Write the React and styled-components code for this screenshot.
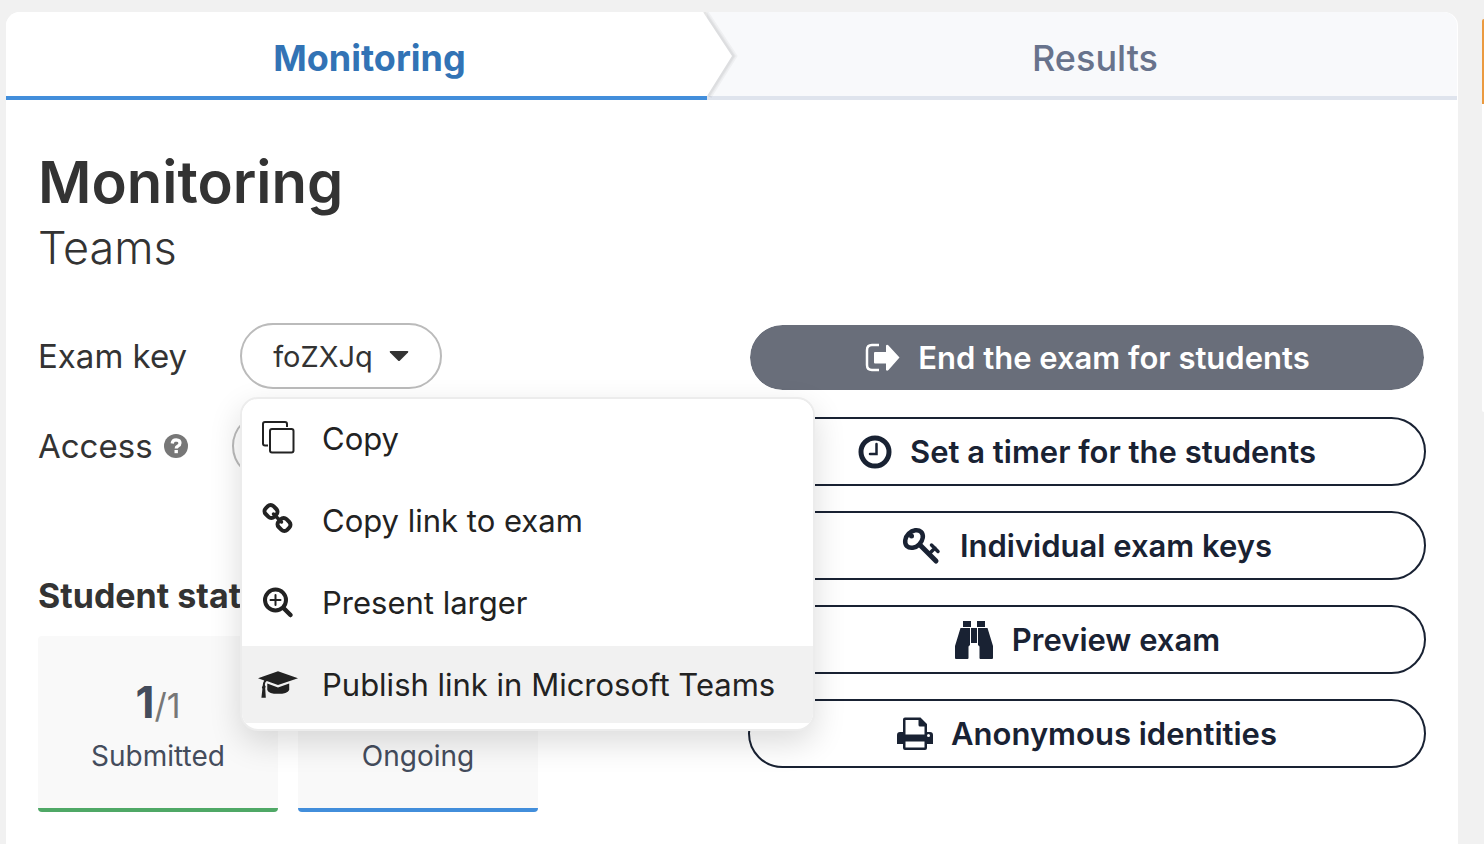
import React from "react";
import styled, { createGlobalStyle } from "styled-components";

const GlobalStyle = createGlobalStyle`
  *, *::before, *::after { box-sizing: border-box; }
  html, body, #root { height: 100%; }
  body {
    margin: 0;
    background: #f1f1f1;
    color: #333333;
    font-family: Inter, "Liberation Sans", sans-serif;
  }
  button { font-family: inherit; cursor: pointer; }
  h1, h2, p { margin: 0; }
`;

const Page = styled.div`
  display: flex;
  gap: 24px;
  min-height: 100%;
  padding: 12px 0 0 6px;
`;

const Card = styled.main`
  flex: 1;
  min-width: 0;
  background: #ffffff;
  border-radius: 14px 14px 0 0;
`;

const SidePanel = styled.aside`
  width: 2px;
  padding-top: 7px;
`;

const SideAccent = styled.div`
  height: 85px;
  background: #eb9a3f;
  border-radius: 2px 0 0 0;
`;

const SideBody = styled.div`
  height: 308px;
  background: #ffffff;
  border-radius: 0 0 0 2px;
`;

const Tabs = styled.nav`
  position: relative;
  display: grid;
  grid-template-columns: 701fr 750fr;
  height: 88px;
  margin-right: 1px;
  border-radius: 14px 14px 0 0;
  overflow: hidden;
`;

const Tab = styled.a`
  display: flex;
  align-items: center;
  justify-content: center;
  padding: 8px 0 0 26px;
  border-bottom: 4px solid ${(p) => (p.$active ? "#428edb" : "#dfe4ed")};
  background: ${(p) => (p.$active ? "#ffffff" : "#f8f9fb")};
  color: ${(p) => (p.$active ? "#3273b5" : "#68738c")};
  font-size: 36px;
  font-weight: ${(p) => (p.$active ? 700 : 500)};
  text-decoration: none;
`;

const TabArrow = styled.svg`
  position: absolute;
  left: 48%;
  top: 0;
  width: 40px;
  height: 88px;
`;

const Content = styled.div`
  padding: 48px 32px 32px;
`;

const Title = styled.h1`
  font-size: 58px;
  line-height: 68px;
  font-weight: 600;
`;

const Subtitle = styled.p`
  font-size: 45px;
  line-height: 64px;
  font-weight: 300;
`;

const Columns = styled.div`
  display: grid;
  grid-template-columns: minmax(0, 1fr) 678px;
  gap: 32px;
  margin-top: 43px;
`;

const Field = styled.div`
  display: flex;
  align-items: center;
  height: 66px;
  margin-bottom: 24px;
`;

const FieldLabel = styled.span`
  display: flex;
  align-items: center;
  gap: 10px;
  width: ${(p) => p.$width}px;
  font-size: 33px;
`;

const KeyPicker = styled.div`
  position: relative;
`;

const Pill = styled.button`
  display: flex;
  align-items: center;
  justify-content: center;
  gap: 16px;
  width: 202px;
  height: 66px;
  padding: 0;
  border: 2px solid #bbbbbb;
  border-radius: 33px;
  background: #ffffff;
  color: #333333;
  font-size: 29px;
`;

const Menu = styled.div`
  position: absolute;
  left: 0;
  top: 74px;
  z-index: 2;
  display: flex;
  flex-direction: column;
  gap: 5px;
  width: 575px;
  padding: 1px 0 6px;
  border: 2px solid #ececec;
  border-radius: 18px;
  background: #ffffff;
  box-shadow: 0 12px 32px rgba(0, 0, 0, 0.14);
  overflow: hidden;
`;

const MenuItem = styled.button`
  display: flex;
  align-items: center;
  gap: 24px;
  width: 100%;
  height: 77px;
  padding: 0 0 0 16px;
  border: 0;
  background: ${(p) => (p.$active ? "#f1f1f1" : "#ffffff")};
  color: #222222;
  font-size: 31px;
  white-space: nowrap;
`;

const Icon = styled.svg`
  flex: none;
  width: ${(p) => p.$size || 40}px;
  height: ${(p) => p.$size || 40}px;
`;

const SectionTitle = styled.h2`
  margin-top: 97px;
  font-size: 34px;
  line-height: 40px;
  font-weight: 700;
  white-space: nowrap;
`;

const Stats = styled.div`
  display: flex;
  gap: 20px;
  margin-top: 20px;
`;

const Stat = styled.div`
  width: 240px;
  height: 176px;
  padding-top: 38px;
  border-bottom: 4px solid ${(p) => p.$color};
  border-radius: 4px;
  background: #f9f9f9;
  color: #444c5c;
  text-align: center;
`;

const StatValue = styled.div`
  height: 60px;
  font-size: 34px;
  line-height: 56px;
  color: #777777;

  strong {
    color: #444c5c;
    font-size: 44px;
  }
`;

const StatLabel = styled.div`
  font-size: 28px;
  line-height: 44px;
`;

const Actions = styled.div`
  display: flex;
  flex-direction: column;
  gap: 25px;
`;

const Action = styled.button`
  display: flex;
  align-items: center;
  justify-content: center;
  gap: 18px;
  height: 69px;
  padding: 0;
  border: 2px solid ${(p) => (p.$filled ? "#ffffff" : "#192233")};
  border-radius: 35px;
  background: ${(p) => (p.$filled ? "#696e7a" : "#ffffff")};
  background-clip: padding-box;
  color: ${(p) => (p.$filled ? "#ffffff" : "#192233")};
  font-size: 31px;
  font-weight: 600;
`;

const CopyIcon = () => (
  <Icon viewBox="0 0 40 40" fill="none" stroke="currentColor" strokeWidth="2">
    <path d="M10 26.500H7Q5 26.500 5 24.500V5Q5 3 7 3H27Q29 3 29 5V8" />
    <rect x="12" y="10" width="23.500" height="23.500" rx="2" />
  </Icon>
);

const LinkIcon = () => (
  <Icon viewBox="0 0 40 40" fill="none" stroke="currentColor" strokeWidth="4" strokeLinecap="round">
    <rect x="-6" y="-5.500" width="12" height="11" rx="4" transform="translate(13 10.500) rotate(45)" />
    <rect x="-6" y="-5.500" width="12" height="11" rx="4" transform="translate(26 23.500) rotate(45)" />
    <path d="M15.500 13l8 8" strokeWidth="3.500" />
  </Icon>
);

const ZoomIcon = () => (
  <Icon viewBox="0 0 40 40" fill="none" stroke="currentColor" strokeLinecap="round">
    <circle cx="17.500" cy="17" r="10.500" strokeWidth="4" />
    <path d="M26 25.500l6.500 6.500" strokeWidth="4.500" />
    <path d="M17.500 12v10M12.500 17h10" strokeWidth="2" />
  </Icon>
);

const CapIcon = () => (
  <Icon viewBox="0 0 41 40" fill="currentColor">
    <path d="M0 13L20.500 6 41 13 20.500 20 9 16q-2 1.300-2 4 1.500 1.500.400 3.300L8 33H3.500l1-9q-1.200-1.800.300-3.300.200-3.200 1.600-5.200z" />
    <path d="M9.500 18.500L20.500 22.500l11.500-4V25q-2 4-11.500 4T9.500 25z" />
  </Icon>
);

const ExitIcon = () => (
  <Icon $size={36} viewBox="0 0 36 36">
    <path d="M15 5H8Q3 5 3 10v15Q3 30 8 30h7" fill="none" stroke="currentColor" strokeWidth="2.500" />
    <path d="M11 12h11V5.500q1-1.500 2.500 0L35.500 17.500 24.500 30q-1.500 1.500-2.500 0V23.500H11q-1 0-1-1V13q0-1 1-1z" fill="currentColor" />
  </Icon>
);

const ClockIcon = () => (
  <Icon $size={34} viewBox="0 0 34 34" fill="none" stroke="currentColor">
    <circle cx="17" cy="17" r="14" strokeWidth="5" />
    <path d="M18.500 9v10H12" strokeWidth="2.500" strokeLinecap="round" />
  </Icon>
);

const KeyIcon = () => (
  <Icon viewBox="0 0 40 40" fill="none" stroke="currentColor" strokeLinecap="round">
    <ellipse cx="12" cy="13" rx="10" ry="7.500" transform="rotate(-45 12 13)" strokeWidth="4.500" />
    <path d="M18 19l16 16" strokeWidth="5" />
    <path d="M27.500 27.500l5.500-5.500M29.500 19l6.500 6.500" strokeWidth="3.500" />
    <circle cx="9.500" cy="10" r="2.500" fill="currentColor" stroke="none" />
  </Icon>
);

const BinocularsIcon = () => (
  <Icon viewBox="0 0 40 40" fill="currentColor">
    <path d="M9 1h8v6H9zM23 1h8v6h-8zM6.500 8H16v17L14.500 26.500V38q0 1-1 1H2q-1 0-1-1V26zM24 8h9.500l5.500 18v12q0 1-1 1H26.500q-1 0-1-1V26.500L24 25zM17 8h6v15h-6z" />
  </Icon>
);

const PrinterIcon = () => (
  <Icon $size={36} viewBox="0 0 36 36" fill="currentColor">
    <path fillRule="evenodd" d="M8 1.500h15.500L30 8v8h3q3 0 3 3v9h-6v4q0 2-2 2H8q-2 0-2-2v-4H0v-9q0-3 3-3h3V3.500q0-2 2-2zm.500 2.500v14.500H27.500V10.500H23q-1.500 0-1.500-1.500V4zM8.500 25.500v6h19v-6zm21.500-6a1.500 1.500 0 1 0 3 0 1.500 1.500 0 1 0-3 0z" />
  </Icon>
);

const HelpIcon = () => (
  <Icon $size={26} viewBox="0 0 26 26">
    <circle cx="13" cy="13" r="12" fill="#777777" />
    <path d="M9.200 10.500Q9.500 6.800 13.200 6.800 17 7 17 10q0 2-2.200 3.200-1.600.8-1.600 2.300" fill="none" stroke="#ffffff" strokeWidth="3.200" />
    <path d="M11.500 17h3.400v3.200h-3.400z" fill="#ffffff" />
  </Icon>
);

const CaretIcon = () => (
  <Icon $size={20} viewBox="0 0 20 20" fill="currentColor">
    <path d="M1.500 5h17q1.500 0 .5 1.500l-8 8q-1 1-2 0l-8-8Q0 5 1.500 5z" />
  </Icon>
);

const menuItems = [
  { label: "Copy", icon: CopyIcon },
  { label: "Copy link to exam", icon: LinkIcon },
  { label: "Present larger", icon: ZoomIcon },
  { label: "Publish link in Microsoft Teams", icon: CapIcon, active: true },
];

const actions = [
  { label: "End the exam for students", icon: ExitIcon, filled: true },
  { label: "Set a timer for the students", icon: ClockIcon },
  { label: "Individual exam keys", icon: KeyIcon },
  { label: "Preview exam", icon: BinocularsIcon },
  { label: "Anonymous identities", icon: PrinterIcon },
];

export default function App() {
  return (
    <>
      <GlobalStyle />
      <Page>
        <Card>
          <Tabs>
            <Tab href="#monitoring" $active>Monitoring</Tab>
            <Tab href="#results">Results</Tab>
            <TabArrow viewBox="0 0 40 88" aria-hidden="true">
              <g fill="none" stroke="#000000" strokeOpacity="0.035">
                <path d="M2 0L31 44 6 84" strokeWidth="8" />
                <path d="M2 0L31 44 6 84" strokeWidth="5" />
                <path d="M2 0L31 44 6 84" strokeWidth="3" />
              </g>
              <path d="M0 0H1L30 44 5 84H0z" fill="#ffffff" />
              <path d="M0 84H5V88H0z" fill="#428edb" />
            </TabArrow>
          </Tabs>
          <Content>
            <Title>Monitoring</Title>
            <Subtitle>Teams</Subtitle>
            <Columns>
              <div>
                <Field>
                  <FieldLabel id="key-label" $width={202}>Exam key</FieldLabel>
                  <KeyPicker>
                    <Pill aria-describedby="key-label" aria-haspopup="menu" aria-expanded="true">
                      foZXJq <CaretIcon />
                    </Pill>
                    <Menu role="menu">
                      {menuItems.map(({ label, icon: Glyph, active }) => (
                        <MenuItem key={label} role="menuitem" $active={active}>
                          <Glyph />
                          {label}
                        </MenuItem>
                      ))}
                    </Menu>
                  </KeyPicker>
                </Field>
                <Field>
                  <FieldLabel id="access-label" $width={194}>Access <HelpIcon /></FieldLabel>
                  <Pill aria-labelledby="access-label" />
                </Field>
                <SectionTitle>Student stat</SectionTitle>
                <Stats>
                  <Stat $color="#4fa866">
                    <StatValue><strong>1</strong>/1</StatValue>
                    <StatLabel>Submitted</StatLabel>
                  </Stat>
                  <Stat $color="#428edb">
                    <StatValue />
                    <StatLabel>Ongoing</StatLabel>
                  </Stat>
                </Stats>
              </div>
              <Actions>
                {actions.map(({ label, icon: Glyph, filled }) => (
                  <Action key={label} $filled={filled}>
                    <Glyph />
                    {label}
                  </Action>
                ))}
              </Actions>
            </Columns>
          </Content>
        </Card>
        <SidePanel>
          <SideAccent />
          <SideBody />
        </SidePanel>
      </Page>
    </>
  );
}
